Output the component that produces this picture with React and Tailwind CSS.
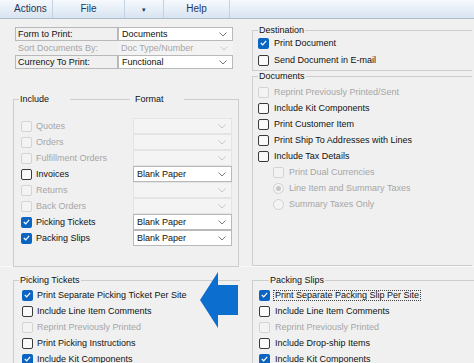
import React from "react";

const FONT = { fontFamily: '"Liberation Sans", Arial, sans-serif' };

function Chevron({ dim }) {
  return (
    <svg width="8" height="5" viewBox="0 0 8 5" className="shrink-0">
      <polyline points="0.5,0.5 4,4 7.5,0.5" fill="none" stroke={dim ? "#c8c8c8" : "#7a7a7a"} strokeWidth="1" />
    </svg>
  );
}

function Drop({ text, dim, w, h = "h-[14px]" }) {
  return (
    <div
      className={`${w} ${h} flex items-center justify-between pl-[3px] pr-[5px] border ${
        dim ? "bg-[#f4f4f4] border-[#e4e4e4] text-[#a8a8a8]" : "bg-white border-[#b9b9b9] text-[#111]"
      }`}
    >
      <span>{text}</span>
      <Chevron dim={dim} />
    </div>
  );
}

function Box({ s }) {
  if (s === "on")
    return (
      <div className="w-[11px] h-[11px] rounded-[2px] bg-[#0a64c2] flex items-center justify-center shrink-0">
        <svg width="7" height="6" viewBox="0 0 7 6">
          <polyline points="0.8,3 2.7,4.8 6.2,0.9" fill="none" stroke="white" strokeWidth="1.2" />
        </svg>
      </div>
    );
  if (s === "dis")
    return <div className="w-[11px] h-[11px] rounded-[2px] border border-[#d4d4d4] bg-[#f3f3f3] shrink-0" />;
  return <div className="w-[11px] h-[11px] rounded-[2px] border border-[#3a3a3a] bg-[#fafafa] shrink-0" />;
}

function Radio({ checked }) {
  return (
    <div className="w-[11px] h-[11px] rounded-full border border-[#d0d0d0] bg-[#f4f4f4] flex items-center justify-center shrink-0">
      {checked && <div className="w-[5px] h-[5px] rounded-full bg-[#c6c6c6]" />}
    </div>
  );
}

function Row({ s, label, radio, checked, indent, gap = "gap-[5px]", focus }) {
  const dis = s === "dis" || radio;
  return (
    <div className={`flex items-center h-[16px] ${gap} ${indent ? "pl-[15px]" : ""}`}>
      {radio ? <Radio checked={checked} /> : <Box s={s} />}
      <span
        className={`${dis ? "text-[#a6a6a6]" : "text-[#111]"} ${
          focus ? "outline outline-1 outline-dotted outline-[#444] px-[1px] -ml-[1px]" : ""
        } whitespace-nowrap`}
      >
        {label}
      </span>
    </div>
  );
}

function Group({ legend, legendMl = "ml-[6px]", className = "", inner = "", children }) {
  return (
    <fieldset className={`border border-[#cdcdcd] ${className}`}>
      <legend className={`${legendMl} px-[1px] leading-[10px] text-[#111]`}>{legend}</legend>
      <div className={inner}>{children}</div>
    </fieldset>
  );
}

export default function App() {
  return (
    <div style={FONT} className="relative w-[474px] h-[363px] overflow-hidden bg-[#f0f0f0] text-[9px] leading-none">
      {/* Menu bar */}
      <div className="h-[19px] flex items-stretch border-b border-[#aebdcd] bg-gradient-to-b from-[#f6f9fd] to-[#d8e4f1] text-[10px] text-[#1c365c]">
        <div className="w-[53px] pl-[14px] flex items-center border-r border-[#c3d1e0]">Actions</div>
        <div className="w-[72px] flex items-center justify-center border-r border-[#c3d1e0]">File</div>
        <div className="w-[39px] flex items-center justify-center border-r border-[#c3d1e0] text-[7px]">▾</div>
        <div className="w-[66px] flex items-center justify-center border-r border-[#c3d1e0]">Help</div>
        <div className="flex-1" />
      </div>

      <div className="flex h-[247px]">
        {/* Left column */}
        <div className="w-[240px] pt-[8px]">
          <div className="pl-[15px] flex flex-col">
            <div className="flex h-[14px]">
              <div className="w-[103px] border border-[#b9b9b9] flex items-center pl-[2px] text-[#111]">Form to Print:</div>
              <Drop text="Documents" w="w-[115px]" />
            </div>
            <div className="flex h-[14px]">
              <div className="w-[103px] flex items-center pl-[3px] text-[#a6a6a6]">Sort Documents By:</div>
              <div className="w-[115px] flex items-center justify-between pl-[3px] pr-[5px] bg-[#f3f3f3] text-[#a6a6a6]">
                <span>Doc Type/Number</span>
                <Chevron dim />
              </div>
            </div>
            <div className="flex h-[14px]">
              <div className="w-[103px] border border-[#b9b9b9] flex items-center pl-[2px] text-[#111]">Currency To Print:</div>
              <Drop text="Functional" w="w-[115px]" />
            </div>
          </div>

          <Group
            className="ml-[13px] mt-[25px] w-[226px]"
            inner="pt-[14px] pb-[20px] pl-[7px]"
            legendMl="ml-[5px]"
            legend={
              <div className="flex items-center">
                <span>Include</span>
                <div className="ml-[21px] w-[60px] h-0 border-t border-[#cdcdcd]" />
                <span className="ml-[5px] pr-[19px]">Format</span>
              </div>
            }
          >
            {[
              ["dis", "Quotes", ""],
              ["dis", "Orders", ""],
              ["dis", "Fulfillment Orders", ""],
              ["off", "Invoices", "Blank Paper"],
              ["dis", "Returns", ""],
              ["dis", "Back Orders", ""],
              ["on", "Picking Tickets", "Blank Paper"],
              ["on", "Packing Slips", "Blank Paper"],
            ].map(([s, l, f]) => (
              <div key={l} className="flex items-center h-[16px]">
                <div className="w-[112px]">
                  <Row s={s} label={l} gap="gap-[4px]" />
                </div>
                <Drop text={f} dim={s === "dis"} w="w-[99px]" h="h-[16px]" />
              </div>
            ))}
          </Group>
        </div>

        {/* Right column */}
        <div className="flex-1 pl-[12px] pt-[6px]">
          <Group legend="Destination" legendMl="ml-[5px]" className="w-[220px] border-r-0" inner="pl-[5px] pb-[2px] flex flex-col gap-[1px]">
            <Row s="on" label="Print Document" />
            <Row s="off" label="Send Document in E-mail" />
          </Group>
          <Group legend="Documents" legendMl="ml-[5px]" className="w-[220px] border-r-0" inner="pl-[5px] pt-[3px] pb-[53px]">
            <Row s="dis" label="Reprint Previously Printed/Sent" />
            <Row s="off" label="Include Kit Components" />
            <Row s="off" label="Print Customer Item" />
            <Row s="off" label="Print Ship To Addresses with Lines" />
            <Row s="off" label="Include Tax Details" />
            <Row s="dis" label="Print Dual Currencies" indent />
            <Row radio checked label="Line Item and Summary Taxes" indent />
            <Row radio label="Summary Taxes Only" indent />
          </Group>
        </div>
      </div>

      {/* Bottom section */}
      <div className="flex border-t border-[#fafafa]">
        <div className="w-[240px]">
          <Group
            legend="Picking Tickets"
            legendMl="ml-[5px]"
            className="ml-[13px] mt-[8px] w-[227px] border-r-0"
            inner="pl-[8px] pt-[2px]"
          >
            <Row s="on" label="Print Separate Picking Ticket Per Site" gap="gap-[4px]" />
            <Row s="off" label="Include Line Item Comments" gap="gap-[4px]" />
            <Row s="dis" label="Reprint Previously Printed" gap="gap-[4px]" />
            <Row s="off" label="Print Picking Instructions" gap="gap-[4px]" />
            <Row s="on" label="Include Kit Components" gap="gap-[4px]" />
          </Group>
        </div>
        <div className="flex-1 pl-[12px]">
          <Group
            legend="Packing Slips"
            legendMl="ml-[16px]"
            className="mt-[8px] w-[222px] border-r-0"
            inner="pl-[6px] pt-[2px]"
          >
            <Row s="on" label="Print Separate Packing Slip Per Site" focus />
            <Row s="off" label="Include Line Item Comments" />
            <Row s="dis" label="Reprint Previously Printed" />
            <Row s="off" label="Include Drop-ship Items" />
            <Row s="on" label="Include Kit Components" />
          </Group>
        </div>
      </div>

      {/* Annotation arrow */}
      <svg className="absolute left-[196px] top-[271px]" width="46" height="60" viewBox="0 0 46 60">
        <polygon points="4,29 22,1 22,14 42,14 42,44 22,44 22,57" fill="#0c6fcf" />
      </svg>
    </div>
  );
}
